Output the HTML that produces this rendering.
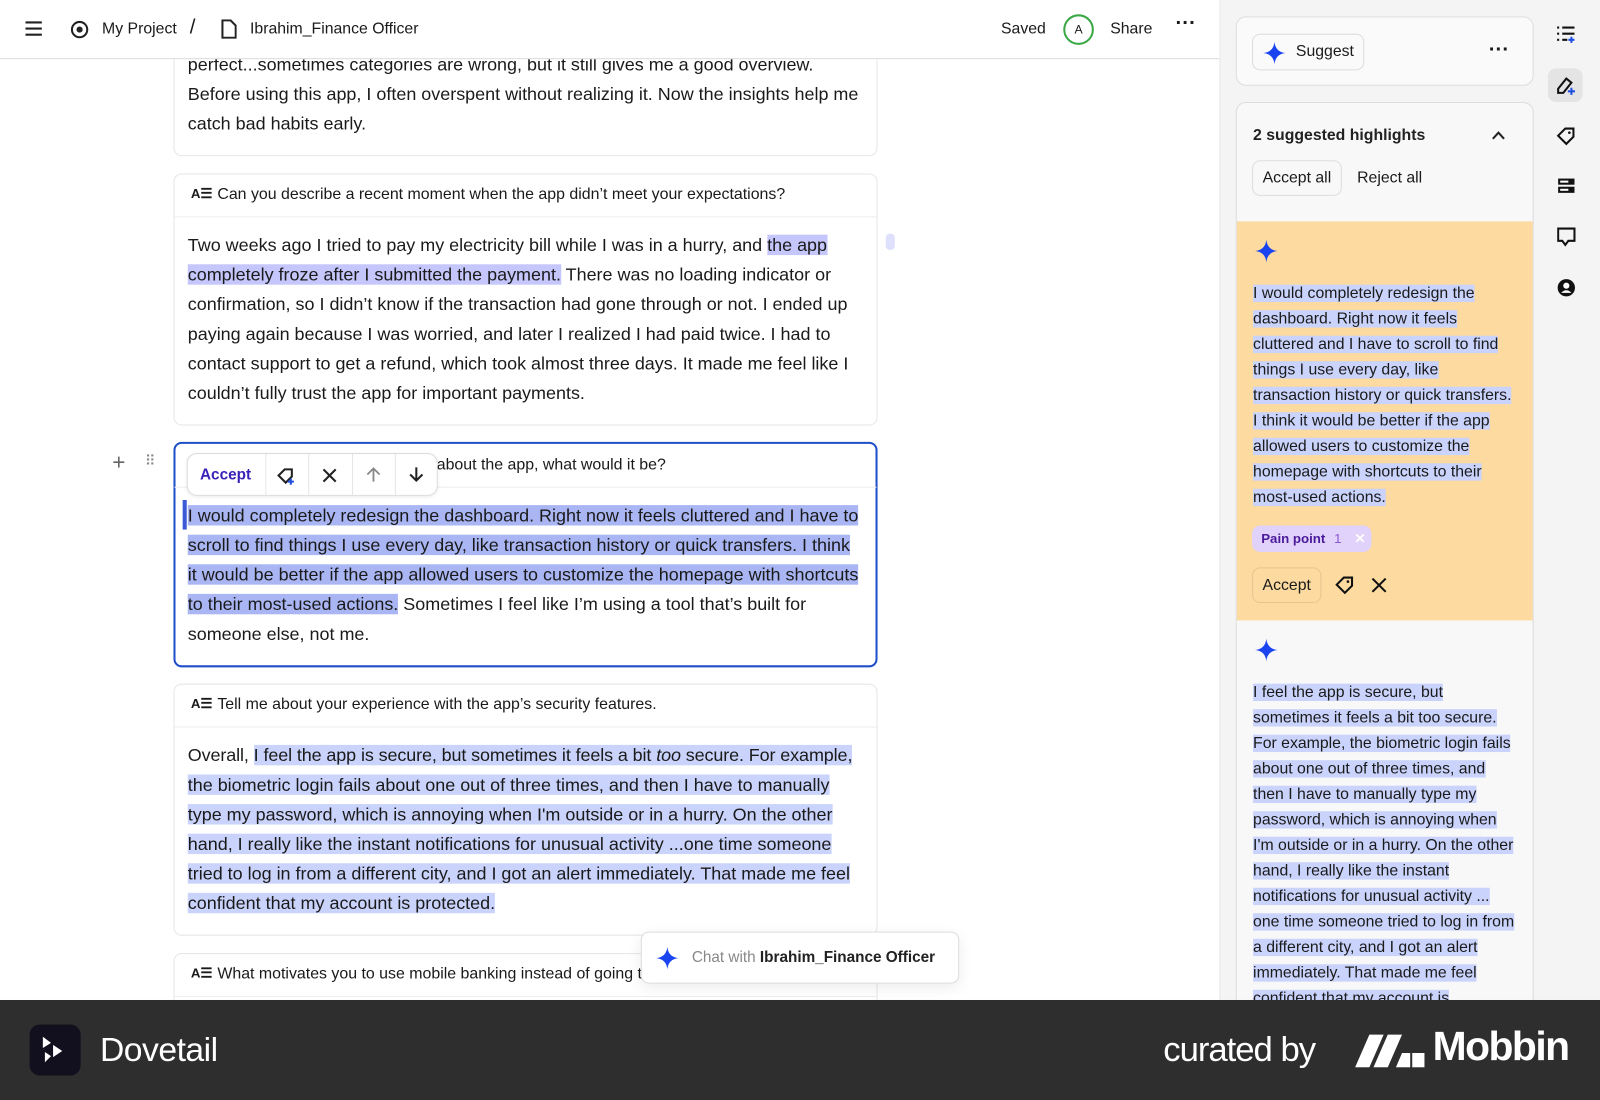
<!DOCTYPE html>
<html><head><meta charset="utf-8"><style>
*{margin:0;padding:0;box-sizing:border-box}
html,body{width:1600px;height:1100px;overflow:hidden}
body{font-family:"Liberation Sans",sans-serif;color:#1a1a1a;background:#fff;position:relative}
#w{position:absolute;left:0;top:0;width:1568px;height:1078px;transform:scale(1.0204);transform-origin:0 0}
.abs{position:absolute}
.l{position:absolute;left:184px;font-size:17.6px;white-space:nowrap;line-height:26px}
.h{background:#c5c6fb}
.b{background:#c9d3fb}
.s{background:#a9b6f3}
.card{position:absolute;left:170px;width:690px;border:1px solid #e6e6e6;border-radius:8px;background:#fff}
.q{position:absolute;left:213px;font-size:15.6px;white-space:nowrap}
.qi{position:absolute;left:187px;font-size:13px;font-weight:bold}
.r{position:absolute;left:1228px;font-size:15.5px;white-space:nowrap;line-height:21px}
.r span{background:#c9d3fb}
</style></head><body><div id="w">
<!-- top bar -->
<div class="abs" style="left:0;top:0;width:1195px;height:58px;border-bottom:1px solid #ddd;background:#fff;z-index:5">
<svg class="abs" style="left:24px;top:20px" width="18" height="16"><path d="M1 2h16M1 8h16M1 14h16" stroke="#222" stroke-width="2"/></svg>
<svg class="abs" style="left:69px;top:20px" width="18" height="18"><circle cx="9" cy="9" r="7.5" fill="none" stroke="#222" stroke-width="2"/><circle cx="9" cy="9" r="3" fill="#222"/></svg>
<div class="abs" style="left:100px;top:20px;font-size:15.5px">My Project</div>
<div class="abs" style="left:186px;top:16px;font-size:20px">/</div>
<svg class="abs" style="left:216px;top:19px" width="16" height="19"><path d="M2 1h8l5 5v12H2z" fill="none" stroke="#222" stroke-width="2"/></svg>
<div class="abs" style="left:245px;top:20px;font-size:15.5px">Ibrahim_Finance Officer</div>
<div class="abs" style="left:981px;top:20px;font-size:15.5px">Saved</div>
<div class="abs" style="left:1042px;top:14px;width:30px;height:30px;border:2px solid #3aa845;border-radius:50%;font-size:12px;text-align:center;line-height:26px">A</div>
<div class="abs" style="left:1088px;top:20px;font-size:15.5px">Share</div>
<div class="abs" style="left:1152px;top:12px;font-size:20px;font-weight:bold">···</div>
</div>
<!-- card 1 -->
<div class="card" style="top:20px;height:133px"></div>
<div class="l" style="top:50px">perfect...sometimes categories are wrong, but it still gives me a good overview.</div>
<div class="l" style="top:79px">Before using this app, I often overspent without realizing it. Now the insights help me</div>
<div class="l" style="top:108px">catch bad habits early.</div>
<!-- card 2 -->
<div class="card" style="top:170px;height:247px"></div>
<div class="abs" style="left:171px;top:212px;width:688px;border-top:1px solid #eee"></div>
<div class="qi" style="top:182px">A☰</div>
<div class="q" style="top:182px">Can you describe a recent moment when the app didn’t meet your expectations?</div>
<div class="l" style="top:227px">Two weeks ago I tried to pay my electricity bill while I was in a hurry, and <span class="h">the app</span></div>
<div class="l" style="top:256px"><span class="h">completely froze after I submitted the payment.</span> There was no loading indicator or</div>
<div class="l" style="top:285px">confirmation, so I didn’t know if the transaction had gone through or not. I ended up</div>
<div class="l" style="top:314px">paying again because I was worried, and later I realized I had paid twice. I had to</div>
<div class="l" style="top:343px">contact support to get a refund, which took almost three days. It made me feel like I</div>
<div class="l" style="top:372px">couldn’t fully trust the app for important payments.</div>
<div class="abs" style="left:868px;top:229px;width:9px;height:16px;border-radius:4px;background:#dfe0fb"></div>
<!-- card 3 -->
<div class="card" style="top:433px;height:221px;border:2px solid #1f4fc9"></div>
<div class="abs" style="left:171px;top:477px;width:688px;border-top:1px solid #eee"></div>
<div class="abs" style="left:110px;top:440px;font-size:22px;color:#666">+</div>
<div class="abs" style="left:142px;top:443px;font-size:14px;color:#888;letter-spacing:-2px">⠿</div>
<div class="q" style="top:447px;left:428px">about the app, what would it be?</div>
<div class="abs" style="left:183px;top:444px;width:246px;height:42px;border:1px solid #ddd;border-radius:10px;background:#fff;box-shadow:0 1px 3px rgba(0,0,0,.08)">
<div class="abs" style="left:12px;top:12px;font-size:15px;color:#3a22b8;font-weight:bold">Accept</div>
<div class="abs" style="left:76px;top:0;height:40px;border-left:1px solid #e6e6e6"></div>
<svg class="abs" style="left:86px;top:10px" width="22" height="22"><path d="M3 11l6-6h7v7l-6 6z" fill="none" stroke="#222" stroke-width="2"/><path d="M15 14v6M12 17h6" stroke="#1f4fe0" stroke-width="2"/></svg>
<div class="abs" style="left:118px;top:0;height:40px;border-left:1px solid #e6e6e6"></div>
<svg class="abs" style="left:131px;top:13px" width="16" height="16"><path d="M2 2l12 12M14 2L2 14" stroke="#222" stroke-width="2"/></svg>
<div class="abs" style="left:161px;top:0;height:40px;border-left:1px solid #e6e6e6"></div>
<svg class="abs" style="left:174px;top:12px" width="16" height="17"><path d="M8 15V2M2 8l6-6 6 6" fill="none" stroke="#888" stroke-width="1.8"/></svg>
<div class="abs" style="left:203px;top:0;height:40px;border-left:1px solid #e6e6e6"></div>
<svg class="abs" style="left:216px;top:12px" width="16" height="17"><path d="M8 1v13M2 8l6 6 6-6" fill="none" stroke="#222" stroke-width="2"/></svg>
</div>
<div class="abs" style="left:179px;top:490px;width:4px;height:29px;background:#3b5bd6"></div>
<div class="l" style="top:492px"><span class="s">I would completely redesign the dashboard. Right now it feels cluttered and I have to</span></div>
<div class="l" style="top:521px"><span class="s">scroll to find things I use every day, like transaction history or quick transfers. I think</span></div>
<div class="l" style="top:550px"><span class="s">it would be better if the app allowed users to customize the homepage with shortcuts</span></div>
<div class="l" style="top:579px"><span class="s">to their most-used actions.</span> Sometimes I feel like I’m using a tool that’s built for</div>
<div class="l" style="top:608px">someone else, not me.</div>
<!-- card 4 -->
<div class="card" style="top:670px;height:247px"></div>
<div class="abs" style="left:171px;top:712px;width:688px;border-top:1px solid #eee"></div>
<div class="qi" style="top:682px">A☰</div>
<div class="q" style="top:682px">Tell me about your experience with the app’s security features.</div>
<div class="l" style="top:727px;letter-spacing:-0.1px">Overall, <span class="b">I feel the app is secure, but sometimes it feels a bit <i>too</i> secure. For example,</span></div>
<div class="l" style="top:756px"><span class="b">the biometric login fails about one out of three times, and then I have to manually</span></div>
<div class="l" style="top:785px"><span class="b">type my password, which is annoying when I'm outside or in a hurry. On the other</span></div>
<div class="l" style="top:814px"><span class="b">hand, I really like the instant notifications for unusual activity ...one time someone</span></div>
<div class="l" style="top:843px"><span class="b">tried to log in from a different city, and I got an alert immediately. That made me feel</span></div>
<div class="l" style="top:872px"><span class="b">confident that my account is protected.</span></div>
<!-- card 5 -->
<div class="card" style="top:934px;height:60px"></div>
<div class="abs" style="left:171px;top:976px;width:688px;border-top:1px solid #eee"></div>
<div class="qi" style="top:946px">A☰</div>
<div class="q" style="top:946px">What motivates you to use mobile banking instead of going t</div>
<!-- chat -->
<div class="abs" style="left:628px;top:913px;width:312px;height:51px;border:1px solid #ddd;border-radius:8px;background:#fff;box-shadow:0 4px 14px rgba(0,0,0,.08)">
<svg class="abs" style="left:14px;top:14px" width="22" height="22"><path d="M11 0Q12 10 22 11Q12 12 11 22Q10 12 0 11Q10 10 11 0z" fill="#1a44f0"/></svg>
<div class="abs" style="left:49px;top:16px;font-size:15px;color:#888;white-space:nowrap">Chat with <b style="color:#222">Ibrahim_Finance Officer</b></div>
</div>
<!-- right panel -->
<div class="abs" style="left:1195px;top:0;width:405px;height:980px;background:#f4f4f4;border-left:1px solid #e8e8e8"></div>
<div class="abs" style="left:1211px;top:16px;width:292px;height:68px;border:1px solid #ddd;border-radius:10px;background:#fafafa"></div>
<div class="abs" style="left:1227px;top:33px;width:110px;height:36px;border:1px solid #ddd;border-radius:8px;background:#fafafa">
<svg class="abs" style="left:10px;top:7px" width="22" height="22"><path d="M11 0Q12 10 22 11Q12 12 11 22Q10 12 0 11Q10 10 11 0z" fill="#1a44f0"/></svg>
<div class="abs" style="left:42px;top:8px;font-size:15.5px">Suggest</div></div>
<div class="abs" style="left:1459px;top:38px;font-size:20px;font-weight:bold">···</div>
<div class="abs" style="left:1211px;top:100px;width:292px;height:900px;border:1px solid #ddd;border-radius:10px;background:#f8f8f8;overflow:hidden">
<div class="abs" style="left:0;top:116px;width:292px;height:391px;background:#fcdaa0"></div>
</div>
<div class="abs" style="left:1228px;top:124px;font-size:15.5px;font-weight:bold;color:#222">2 suggested highlights</div>
<svg class="abs" style="left:1462px;top:128px" width="13" height="9"><path d="M1 8l5.5-6L12 8" fill="none" stroke="#222" stroke-width="2"/></svg>
<div class="abs" style="left:1227px;top:157px;width:88px;height:35px;border:1px solid #ddd;border-radius:8px;font-size:15.5px;text-align:center;line-height:33px">Accept all</div>
<div class="abs" style="left:1330px;top:166px;font-size:15.5px">Reject all</div>
<svg class="abs" style="left:1230px;top:235px" width="22" height="22"><path d="M11 0Q12 10 22 11Q12 12 11 22Q10 12 0 11Q10 10 11 0z" fill="#1a44f0"/></svg>
<div class="r" style="top:277px"><span>I would completely redesign the</span></div>
<div class="r" style="top:302px"><span>dashboard. Right now it feels</span></div>
<div class="r" style="top:327px"><span>cluttered and I have to scroll to find</span></div>
<div class="r" style="top:352px"><span>things I use every day, like</span></div>
<div class="r" style="top:377px"><span>transaction history or quick transfers.</span></div>
<div class="r" style="top:402px"><span>I think it would be better if the app</span></div>
<div class="r" style="top:427px"><span>allowed users to customize the</span></div>
<div class="r" style="top:452px"><span>homepage with shortcuts to their</span></div>
<div class="r" style="top:477px"><span>most-used actions.</span></div>
<div class="abs" style="left:1227px;top:515px;width:117px;height:26px;border-radius:8px;background:#e0d2fb;font-size:13px;line-height:26px;padding-left:9px;color:#4a1a9a"><b>Pain point</b> <span style="color:#8a5ad0;margin-left:5px">1</span> <span style="color:#fff;margin-left:9px;font-weight:bold">✕</span></div>
<div class="abs" style="left:1227px;top:556px;width:68px;height:35px;border:1px solid #e6c590;border-radius:8px;font-size:15.5px;text-align:center;line-height:33px">Accept</div>
<svg class="abs" style="left:1308px;top:563px" width="20" height="20"><path d="M2 10l7-7h8v8l-7 7z" fill="none" stroke="#111" stroke-width="2"/><circle cx="13" cy="7" r="1.3" fill="#111"/></svg>
<svg class="abs" style="left:1344px;top:566px" width="15" height="15"><path d="M1 1l13 13M14 1L1 14" stroke="#111" stroke-width="2"/></svg>
<svg class="abs" style="left:1230px;top:626px" width="22" height="22"><path d="M11 0Q12 10 22 11Q12 12 11 22Q10 12 0 11Q10 10 11 0z" fill="#1a44f0"/></svg>
<div class="r" style="top:668px"><span>I feel the app is secure, but</span></div>
<div class="r" style="top:693px"><span>sometimes it feels a bit too secure.</span></div>
<div class="r" style="top:718px"><span>For example, the biometric login fails</span></div>
<div class="r" style="top:743px"><span>about one out of three times, and</span></div>
<div class="r" style="top:768px"><span>then I have to manually type my</span></div>
<div class="r" style="top:793px"><span>password, which is annoying when</span></div>
<div class="r" style="top:818px"><span>I'm outside or in a hurry. On the other</span></div>
<div class="r" style="top:843px"><span>hand, I really like the instant</span></div>
<div class="r" style="top:868px"><span>notifications for unusual activity ...</span></div>
<div class="r" style="top:893px"><span>one time someone tried to log in from</span></div>
<div class="r" style="top:918px"><span>a different city, and I got an alert</span></div>
<div class="r" style="top:943px"><span>immediately. That made me feel</span></div>
<div class="r" style="top:968px"><span>confident that my account is</span></div>
<!-- icon column -->
<svg class="abs" style="left:1525px;top:25px" width="20" height="18"><path d="M1 2h2M6 2h12M1 8h2M6 8h12M1 14h2M6 14h5" stroke="#111" stroke-width="2"/><path d="M15 11v6M12 14h6" stroke="#1f4fe0" stroke-width="2"/></svg>
<div class="abs" style="left:1517px;top:67px;width:34px;height:33px;border-radius:8px;background:#e4e4e4"></div>
<svg class="abs" style="left:1524px;top:73px" width="22" height="22"><path d="M3 14l8-10 5 4-8 10H3z" fill="none" stroke="#111" stroke-width="2"/><path d="M16 13v7M12.5 16.5h7" stroke="#1f4fe0" stroke-width="2"/></svg>
<svg class="abs" style="left:1525px;top:123px" width="20" height="20"><path d="M2 10l7-7h8v8l-7 7z" fill="none" stroke="#111" stroke-width="2"/><circle cx="13" cy="7" r="1.3" fill="#111"/></svg>
<svg class="abs" style="left:1526px;top:174px" width="18" height="16"><rect x="1" y="1" width="16" height="6" fill="#111"/><rect x="1" y="9" width="16" height="6" fill="#111"/><rect x="3" y="3" width="8" height="2" fill="#fff"/><rect x="3" y="11" width="8" height="2" fill="#fff"/></svg>
<svg class="abs" style="left:1526px;top:223px" width="18" height="19"><path d="M1 1h16v12H11l-3 4-3-4H1z" fill="none" stroke="#111" stroke-width="2"/></svg>
<svg class="abs" style="left:1526px;top:273px" width="18" height="18"><circle cx="9" cy="9" r="8.5" fill="#111"/><circle cx="9" cy="7" r="3" fill="#fff"/><path d="M4 14q5-5 10 0" fill="#fff"/></svg>
<!-- footer -->
<div class="abs" style="left:0;top:980px;width:1600px;height:140px;background:#2e2e2e"></div>
<div class="abs" style="left:29px;top:1004px;width:50px;height:50px;border-radius:10px;background:#12101e"></div>
<svg class="abs" style="left:40px;top:1014px" width="28" height="30"><path d="M2 2l8 6-8 5zM12 10l9 6-9 6zM4 17l6 4-6 6z" fill="#fff"/></svg>
<div class="abs" style="left:98px;top:1010px;font-size:33px;color:#fff;letter-spacing:-0.5px">Dovetail</div>
<div class="abs" style="left:1140px;top:1010px;font-size:34px;color:#fff;letter-spacing:-1px">curated by</div>
<svg class="abs" style="left:1328px;top:1012px" width="68" height="34"><path d="M0 34L14 2h14L14 34zM18 34L32 2h14L32 34zM40 34l6-14 8 0v14zM56 20h12v14H56z" fill="#fff"/></svg>
<div class="abs" style="left:1404px;top:1004px;font-size:40px;color:#fff;font-weight:bold;letter-spacing:-1.5px">Mobbin</div>
</div></body></html>
